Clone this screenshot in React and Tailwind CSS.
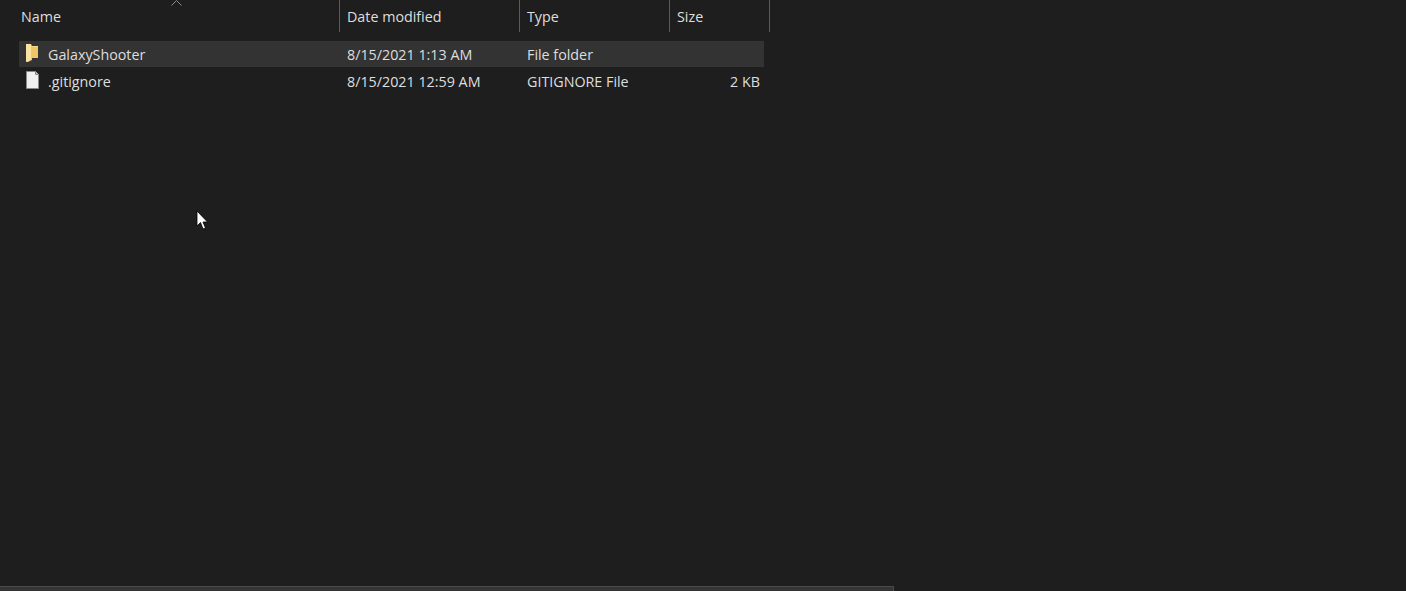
import React from "react";

const font = "font-['Open_Sans','Noto_Sans',sans-serif]";

const FolderIcon = () => (
  <svg width="16" height="20" viewBox="0 0 16 20" className="shrink-0">
    <path d="M2 0h5l1 2h6v12H8v2l-4 2H2z" fill="#f0c565" />
    <path d="M2 0h5v15l-3 2.5H2z" fill="#fbe2a0" />
    <path d="M8 2h6v1H8z" fill="#f8d98a" />
  </svg>
);

const FileIcon = () => (
  <svg width="16" height="20" viewBox="0 0 16 20" className="shrink-0">
    <path d="M2.5 0.5h9l3 3v14h-12z" fill="#f0f0f0" stroke="#8a8a8a" />
    <path d="M11.5 0.5v3h3" fill="#c4c4c4" stroke="#8a8a8a" />
  </svg>
);

const HeaderCell = ({ label, className }) => (
  <div className={`flex h-8 items-center border-r border-[#5a5a5a] pl-[7px] pt-[2px] ${className}`}>
    {label}
  </div>
);

const Row = ({ icon, name, date, type, size, selected }) => (
  <div className={`flex h-[26px] w-[745px] items-center ${selected ? "bg-[#333333]" : ""}`}>
    <div className="flex w-[321px] items-center">
      <div className="ml-[5px] mr-[8px] flex w-[16px] justify-center">{icon}</div>
      <span className="pt-[2px]">{name}</span>
    </div>
    <div className="w-[180px] pl-[7px] pt-[2px]">{date}</div>
    <div className="w-[150px] pl-[7px] pt-[2px]">{type}</div>
    <div className="w-[94px] pr-[4px] pt-[2px] text-right">{size}</div>
  </div>
);

export default function App() {
  return (
    <div className={`relative flex h-[591px] w-[1406px] flex-col overflow-hidden bg-[#1e1e1e] text-[14.3px] leading-none text-[#dedede] ${font}`}>
      <div className="relative flex pl-[14px]">
        <HeaderCell label="Name" className="w-[326px]" />
        <HeaderCell label="Date modified" className="w-[180px]" />
        <HeaderCell label="Type" className="w-[150px]" />
        <HeaderCell label="Size" className="w-[100px]" />
        <svg width="11" height="6" viewBox="0 0 11 6" className="absolute left-[171px] top-0">
          <path d="M0.5 5.5 5.5 0.5l5 5" fill="none" stroke="#8c8c8c" />
        </svg>
      </div>

      <div className="flex flex-1 flex-col gap-px pl-[19px] pt-[9px]">
        <Row icon={<FolderIcon />} name="GalaxyShooter" date="8/15/2021 1:13 AM" type="File folder" selected />
        <Row icon={<FileIcon />} name=".gitignore" date="8/15/2021 12:59 AM" type="GITIGNORE File" size="2 KB" />
      </div>

      {/* horizontal scrollbar */}
      <div className="h-[5px] w-[894px] border-t border-r border-[#4a4a4a] bg-[#343434]" />

      {/* mouse cursor */}
      <svg width="12" height="20" viewBox="0 0 12 20" className="absolute left-[196px] top-[210px]">
        <path d="M1 1v15l3.5-3.5L7 19l2.5-1-2.5-6h4.5z" fill="#fff" stroke="#000" strokeWidth="0.8" />
      </svg>
    </div>
  );
}
